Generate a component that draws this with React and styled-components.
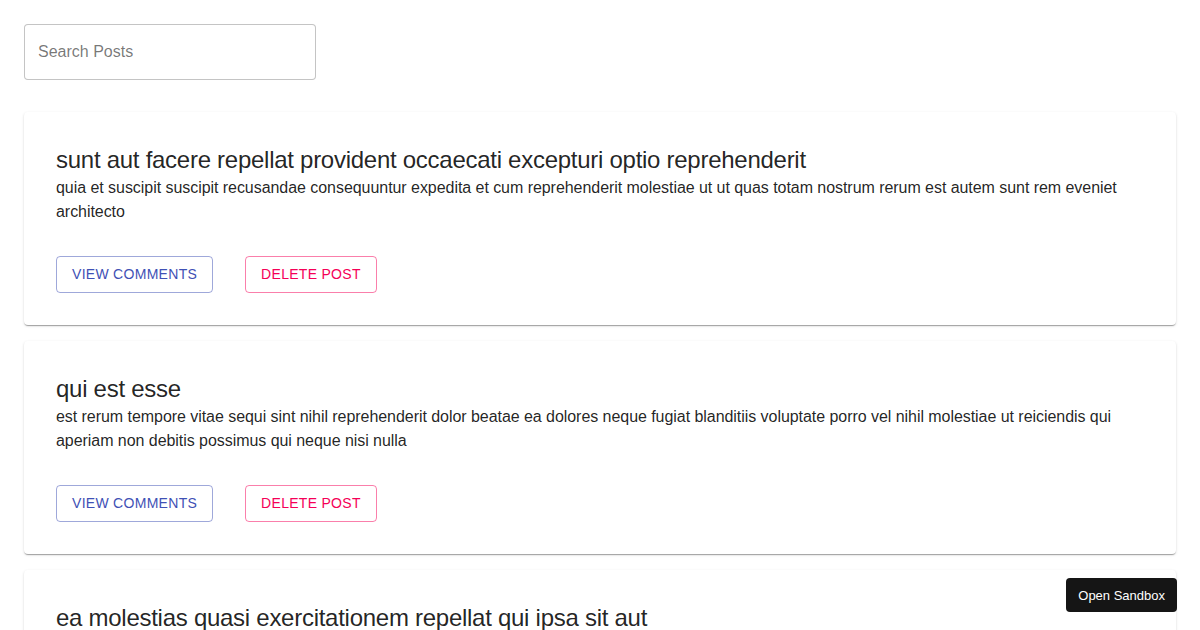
import React from 'react';
import styled, { createGlobalStyle } from 'styled-components';

const GlobalStyle = createGlobalStyle`
  body {
    margin: 0;
    background: #fff;
    font-family: "Liberation Sans", Arial, sans-serif;
    color: rgba(0, 0, 0, 0.87);
  }
`;

const posts = [
  {
    id: 1,
    title: 'sunt aut facere repellat provident occaecati excepturi optio reprehenderit',
    body: 'quia et suscipit suscipit recusandae consequuntur expedita et cum reprehenderit molestiae ut ut quas totam nostrum rerum est autem sunt rem eveniet architecto',
  },
  {
    id: 2,
    title: 'qui est esse',
    body: 'est rerum tempore vitae sequi sint nihil reprehenderit dolor beatae ea dolores neque fugiat blanditiis voluptate porro vel nihil molestiae ut reiciendis qui aperiam non debitis possimus qui neque nisi nulla',
  },
  {
    id: 3,
    title: 'ea molestias quasi exercitationem repellat qui ipsa sit aut',
    body: 'et iusto sed quo iure voluptatem occaecati omnis eligendi aut ad voluptatem doloribus vel accusantium quis pariatur molestiae porro eius odio et labore et velit aut',
  },
];

// page wrapper
const Page = styled.div`
  padding: 24px;
`;

const SearchInput = styled.input`
  box-sizing: border-box;
  width: 292px;
  height: 56px;
  padding: 0 13px;
  border: 1px solid rgba(0, 0, 0, 0.23);
  border-radius: 4px;
  background: #fff;
  font-family: inherit;
  font-size: 16px;
  color: rgba(0, 0, 0, 0.87);
  outline: none;
  &::placeholder {
    color: rgba(0, 0, 0, 0.54);
  }
`;

const PostList = styled.div`
  margin-top: 32px;
  display: flex;
  flex-direction: column;
  gap: 16px;
`;

const Card = styled.div`
  background: #fff;
  border-radius: 4px;
  padding: 32px;
  box-shadow: 0px 2px 1px -1px rgba(0, 0, 0, 0.2),
    0px 1px 1px 0px rgba(0, 0, 0, 0.14), 0px 1px 3px 0px rgba(0, 0, 0, 0.12);
`;

const Title = styled.h2`
  margin: 0;
  font-size: 24px;
  font-weight: 400;
  line-height: 32px;
  letter-spacing: -0.27px;
`;

const Body = styled.p`
  margin: 0;
  font-size: 16px;
  line-height: 24px;
  letter-spacing: -0.05px;
`;

const Actions = styled.div`
  display: flex;
  gap: 32px;
  margin-top: 32px;
`;

const OutlineButton = styled.button`
  box-sizing: border-box;
  height: 37px;
  padding: 0 15px 1px;
  background: transparent;
  border: 1px solid ${p => p.$color === 'secondary' ? 'rgba(245, 0, 87, 0.5)' : 'rgba(63, 81, 181, 0.5)'};
  color: ${p => p.$color === 'secondary' ? '#f50057' : '#3f51b5'};
  border-radius: 4px;
  font-family: inherit;
  font-size: 14px;
  letter-spacing: 0.29px;
  text-transform: uppercase;
  cursor: pointer;
`;

const SandboxButton = styled.button`
  position: fixed;
  right: 23px;
  bottom: 18px;
  height: 34px;
  padding: 0 12px;
  background: #151515;
  color: #fff;
  border: none;
  border-radius: 4px;
  font-family: "Liberation Sans", Arial, sans-serif;
  font-size: 13px;
`;

export default function App() {
  return (
    <Page>
      <GlobalStyle />
      <SearchInput placeholder="Search Posts" />
      <PostList>
        {posts.map(post => (
          <Card key={post.id}>
            <Title>{post.title}</Title>
            <Body>{post.body}</Body>
            <Actions>
              <OutlineButton>View Comments</OutlineButton>
              <OutlineButton $color="secondary">Delete Post</OutlineButton>
            </Actions>
          </Card>
        ))}
      </PostList>
      <SandboxButton>Open Sandbox</SandboxButton>
    </Page>
  );
}
